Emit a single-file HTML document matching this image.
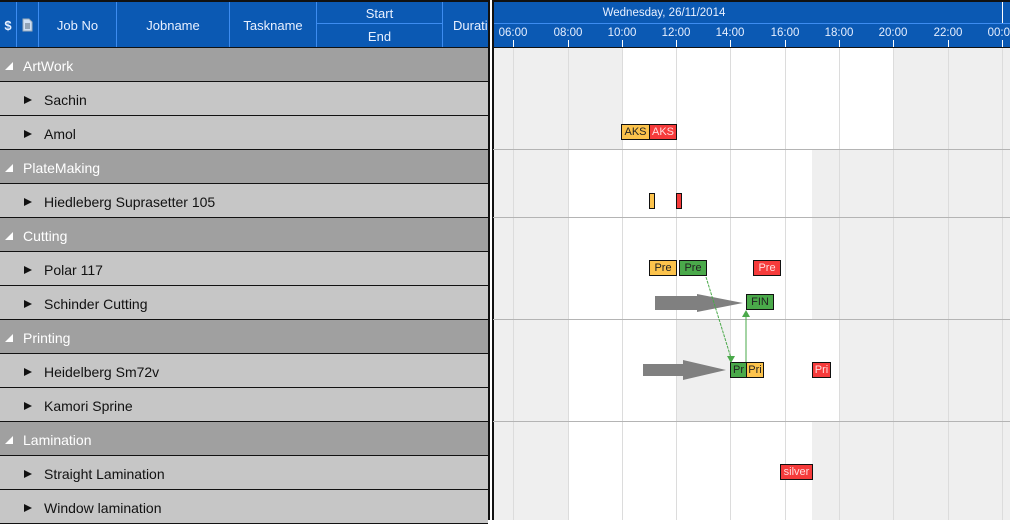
<!DOCTYPE html>
<html><head><meta charset="utf-8"><style>
*{margin:0;padding:0;box-sizing:border-box}
body{width:1010px;height:520px;overflow:hidden;background:#fff;position:relative;font-family:"Liberation Sans","DejaVu Sans",sans-serif}
.a{position:absolute}
.hd{background:#0b59b3;color:#e8f0ff;font-size:13px;display:flex;align-items:center;justify-content:center;border-right:1px solid #3d8cf0;padding-top:1px}
.g{position:absolute;left:0;width:488px;height:34px;background:#a0a0a0;border-bottom:1px solid #111;color:#fff;font-size:14px;line-height:33px;padding-top:2px;padding-left:23px}
.g:before{content:"";position:absolute;left:5px;top:14px;border-left:8px solid transparent;border-bottom:8px solid #fff}
.c{position:absolute;left:0;width:488px;height:34px;background:#c6c6c6;border-bottom:1px solid #111;color:#111;font-size:14px;line-height:33px;padding-top:2px;padding-left:44px}
.c:before{content:"";position:absolute;left:24px;top:14px;border-top:4.5px solid transparent;border-bottom:4.5px solid transparent;border-left:8px solid #111}
.t{position:absolute;height:16px;border:1px solid #111;font-size:11px;line-height:14px;text-align:center;overflow:hidden;color:#222}
.y{background:#fcc34c}.r{background:#f63b3b;color:#fdd}.gr{background:#4aa94a}
.vl{position:absolute;top:47px;width:1px;height:473px;background:#dcdcdc}
.hl{position:absolute;left:493px;width:517px;height:1px;background:#b4b4b4}
.sh{position:absolute;background:#efefef}
.tk{position:absolute;top:40px;width:1px;height:8px;background:#fff}
.tm{position:absolute;top:27px;color:#e8f0ff;font-size:11.5px;width:40px;margin-left:-20px;text-align:center}
</style></head><body>
<div class="a" style="left:0;top:0;width:489px;height:48px;background:#0b59b3;border-top:2px solid #111;border-bottom:1px solid #111"></div>
<div class="a hd" style="left:0;top:2px;width:17px;height:45px;font-weight:bold">$</div>
<div class="a hd" style="left:17px;top:2px;width:22px;height:45px"><svg width="11" height="14"><path d="M1 1h6l3 3v9H1z" fill="#cfe0f5" stroke="#9ab" /><path d="M3 6h5M3 8h5M3 10h5" stroke="#567"/></svg></div>
<div class="a hd" style="left:39px;top:2px;width:78px;height:45px">Job No</div>
<div class="a hd" style="left:117px;top:2px;width:113px;height:45px">Jobname</div>
<div class="a hd" style="left:230px;top:2px;width:87px;height:45px">Taskname</div>
<div class="a hd" style="left:317px;top:2px;width:126px;height:22px;border-bottom:1px solid #3d8cf0">Start</div>
<div class="a hd" style="left:317px;top:24px;width:126px;height:23px">End</div>
<div class="a hd" style="left:443px;top:2px;width:45px;height:45px;justify-content:flex-start;padding-left:10px;border:none;overflow:hidden;white-space:nowrap">Durati</div>
<div class="g" style="top:48px">ArtWork</div>
<div class="c" style="top:82px">Sachin</div>
<div class="c" style="top:116px">Amol</div>
<div class="g" style="top:150px">PlateMaking</div>
<div class="c" style="top:184px">Hiedleberg Suprasetter 105</div>
<div class="g" style="top:218px">Cutting</div>
<div class="c" style="top:252px">Polar 117</div>
<div class="c" style="top:286px">Schinder Cutting</div>
<div class="g" style="top:320px">Printing</div>
<div class="c" style="top:354px">Heidelberg Sm72v</div>
<div class="c" style="top:388px">Kamori Sprine</div>
<div class="g" style="top:422px">Lamination</div>
<div class="c" style="top:456px">Straight Lamination</div>
<div class="c" style="top:490px">Window lamination</div>
<div class="a" style="left:488px;top:0;width:2px;height:520px;background:#111"></div>
<div class="a" style="left:492px;top:0;width:2px;height:520px;background:#111"></div>
<div class="sh" style="left:494px;top:48px;width:516px;height:472px"></div>
<div class="a" style="left:622px;top:48px;width:271px;height:101px;background:#fff"></div>
<div class="a" style="left:568px;top:150px;width:244px;height:169px;background:#fff"></div>
<div class="a" style="left:568px;top:320px;width:108px;height:101px;background:#fff"></div>
<div class="a" style="left:730px;top:320px;width:109px;height:101px;background:#fff"></div>
<div class="a" style="left:568px;top:422px;width:244px;height:98px;background:#fff"></div>
<div class="vl" style="left:513px"></div><div class="vl" style="left:568px"></div><div class="vl" style="left:622px"></div><div class="vl" style="left:676px"></div><div class="vl" style="left:730px"></div><div class="vl" style="left:785px"></div><div class="vl" style="left:839px"></div><div class="vl" style="left:893px"></div><div class="vl" style="left:948px"></div><div class="vl" style="left:1002px"></div>
<div class="hl" style="top:149px"></div><div class="hl" style="top:217px"></div><div class="hl" style="top:319px"></div><div class="hl" style="top:421px"></div>
<div class="a" style="left:494px;top:0;width:516px;height:48px;background:#0b59b3;border-top:2px solid #111"></div>
<div class="a" style="left:494px;top:23px;width:516px;height:1px;background:#3d8cf0"></div>
<div class="a" style="left:1002px;top:2px;width:1px;height:21px;background:#fff"></div>
<div class="a" style="left:494px;top:7px;width:340px;text-align:center;color:#e8f0ff;font-size:11.5px">Wednesday, 26/11/2014</div>
<div class="tm" style="left:513px">06:00</div><div class="tm" style="left:568px">08:00</div><div class="tm" style="left:622px">10:00</div><div class="tm" style="left:676px">12:00</div><div class="tm" style="left:730px">14:00</div><div class="tm" style="left:785px">16:00</div><div class="tm" style="left:839px">18:00</div><div class="tm" style="left:893px">20:00</div><div class="tm" style="left:948px">22:00</div><div class="tm" style="left:1002px">00:00</div>
<div class="tk" style="left:513px"></div><div class="tk" style="left:568px"></div><div class="tk" style="left:622px"></div><div class="tk" style="left:676px"></div><div class="tk" style="left:730px"></div><div class="tk" style="left:785px"></div><div class="tk" style="left:839px"></div><div class="tk" style="left:893px"></div><div class="tk" style="left:948px"></div><div class="tk" style="left:1002px"></div>
<div class="a" style="left:494px;top:47px;width:516px;height:1px;background:#111"></div>
<div class="t y" style="left:621px;top:124px;width:29px">AKS</div>
<div class="t r" style="left:649px;top:124px;width:28px">AKS</div>
<div class="t y" style="left:649px;top:193px;width:6px"></div>
<div class="t r" style="left:676px;top:193px;width:6px"></div>
<div class="t y" style="left:649px;top:260px;width:28px">Pre</div>
<div class="t gr" style="left:679px;top:260px;width:28px">Pre</div>
<div class="t r" style="left:753px;top:260px;width:28px">Pre</div>
<div class="t gr" style="left:746px;top:294px;width:28px">FIN</div>
<div class="t gr" style="left:730px;top:362px;width:17px">Pr</div>
<div class="t y" style="left:746px;top:362px;width:18px">Pri</div>
<div class="t r" style="left:812px;top:362px;width:19px">Pri</div>
<div class="t r" style="left:780px;top:464px;width:33px">silver</div>
<svg class="a" style="left:0;top:0" width="1010" height="520">
<path d="M655 296H697V294L743 303L697 312V310H655Z" fill="#808080"/>
<path d="M643 364H683V360L726 370L683 380V376H643Z" fill="#808080"/>
<path d="M706 277L731 358" stroke="#4aa94a" stroke-width="1" stroke-dasharray="3,1"/>
<path d="M727 356L735 356L731 363Z" fill="#4aa94a"/>
<path d="M746 362V316" stroke="#4aa94a"/>
<path d="M742 317L750 317L746 310Z" fill="#4aa94a"/>
</svg>
</body></html>
